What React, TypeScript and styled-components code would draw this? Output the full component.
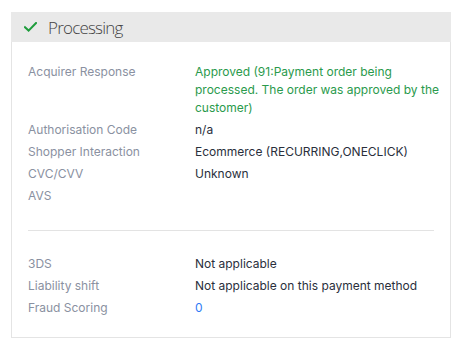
import styled, { createGlobalStyle } from "styled-components";

const GlobalStyle = createGlobalStyle`
  html, body {
    margin: 0;
    padding: 0;
    background: #ffffff;
  }
`;

type Tone = "default" | "success" | "link";

const rowsTop: { label: string; value: string; tone?: Tone }[] = [
  {
    label: "Acquirer Response",
    value: "Approved (91:Payment order being processed. The order was approved by the customer)",
    tone: "success",
  },
  { label: "Authorisation Code", value: "n/a" },
  { label: "Shopper Interaction", value: "Ecommerce (RECURRING,ONECLICK)" },
  { label: "CVC/CVV", value: "Unknown" },
  { label: "AVS", value: "" },
];

const rowsBottom: { label: string; value: string; tone?: Tone }[] = [
  { label: "3DS", value: "Not applicable" },
  { label: "Liability shift", value: "Not applicable on this payment method" },
  { label: "Fraud Scoring", value: "0", tone: "link" },
];

const CheckIcon = () => (
  <svg width="13" height="10" viewBox="0 0 13 10" fill="none">
    <path d="M1 5.2 L4.6 8.6 L12 1" stroke="#1e9c3c" strokeWidth="2" strokeLinecap="square" />
  </svg>
);

export default function App() {
  return (
    <>
      <GlobalStyle />
      <Page>
        <Card>
          <Header>
            <CheckIcon />
            <Title>Processing</Title>
          </Header>
          <Body>
            <List>
              {rowsTop.map((r) => (
                <Row key={r.label}>
                  <Label>{r.label}</Label>
                  <Value $tone={r.tone ?? "default"}>{r.value}</Value>
                </Row>
              ))}
            </List>
            <Divider />
            <List>
              {rowsBottom.map((r) => (
                <Row key={r.label}>
                  <Label>{r.label}</Label>
                  <Value $tone={r.tone ?? "default"}>{r.value}</Value>
                </Row>
              ))}
            </List>
          </Body>
        </Card>
      </Page>
    </>
  );
}

const Page = styled.div`
  padding: 12px 0 0 11px;
`;

const Card = styled.div`
  width: 440px;
  box-sizing: border-box;
  border: 1px solid #e4e4e4;
  border-top: none;
  background: #fff;
`;

const Header = styled.div`
  height: 30px;
  background: #e9e9e9;
  display: flex;
  align-items: center;
  gap: 11px;
  padding-left: 13px;
  margin: 0 -1px;
`;

const Title = styled.span`
  font-family: "Open Sans", sans-serif;
  font-size: 17px;
  font-weight: 300;
  letter-spacing: -0.8px;
  color: #444444;
  line-height: 1;
`;

const Body = styled.div`
  padding: 21px 16px 20px 16px;
`;

const List = styled.div`
  display: flex;
  flex-direction: column;
  gap: 4px;
`;

const Row = styled.div`
  display: grid;
  grid-template-columns: 167px 1fr;
  font-family: Inter, "Noto Sans", sans-serif;
  font-size: 12px;
  line-height: 18px;
  min-height: 18px;
`;

const Label = styled.div`
  color: #8a91a1;
`;

const toneColor: Record<Tone, string> = {
  default: "#2a2f3c",
  success: "#2a9a4c",
  link: "#2f7cf6",
};

const Value = styled.div<{ $tone: Tone }>`
  color: ${(p) => toneColor[p.$tone]};
  margin-right: -14px;
`;

const Divider = styled.div`
  height: 1px;
  background: #e3e3e3;
  margin: 25px 0 24px;
`;
